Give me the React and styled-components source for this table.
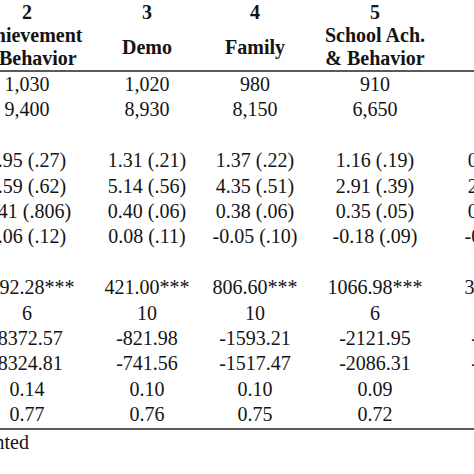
import React from 'react'
import styled, { createGlobalStyle } from 'styled-components'

const GlobalStyle = createGlobalStyle`
  html, body {
    margin: 0;
    padding: 0;
    background: #ffffff;
    overflow: hidden;
  }
  body {
    font-family: "Liberation Serif", "Times New Roman", serif;
    color: #141414;
  }
`

// the table is wider than the window; the label column sits off to the left
const Page = styled.div`
  width: 474px;
  height: 474px;
  overflow: hidden;
`

const Sheet = styled.div`
  margin-left: -233px;
  width: max-content;
`

const Table = styled.table`
  border-collapse: collapse;
  table-layout: fixed;
  font-family: "Liberation Serif", "Times New Roman", serif;
  font-size: 20px;
  color: #141414;
`

const Col = styled.col`
  width: ${p => p.$w}px;
`

const NumberRow = styled.tr`
  height: 24px;
`

const LabelRow = styled.tr`
  border-bottom: 2px solid #5a5a5a;
`

const HeadCell = styled.th`
  padding: 0;
  font-weight: 700;
  text-align: center;
  vertical-align: middle;
  white-space: nowrap;
  line-height: ${p => (p.$tall ? '23px' : '24px')};
`

const Row = styled.tr`
  height: 25.4px;
  ${p => p.$last && 'border-bottom: 2px solid #5a5a5a;'}
`

const Cell = styled.td`
  padding: 0;
  text-align: ${p => (p.$stub ? 'left' : 'center')};
  white-space: nowrap;
  line-height: 25.4px;
`

const Note = styled.div`
  width: 262px;
  text-align: right;
  font-family: "Liberation Serif", "Times New Roman", serif;
  font-size: 20px;
  line-height: 24px;
  white-space: nowrap;
`

const widths = [200, 120, 120, 96, 144, 120]

const heads = [
  { n: '', label: ['Model'] },
  { n: '2', label: ['Achievement', '& Behavior'] },
  { n: '3', label: ['Demo'] },
  { n: '4', label: ['Family'] },
  { n: '5', label: ['School Ach.', '& Behavior'] },
  { n: '6', label: ['Full'] },
]

const rows = [
  ['Schools', '1,030', '1,020', '980', '910', '1,060'],
  ['Students', '9,400', '8,930', '8,150', '6,650', '10,200'],
  null,
  ['Intercept', '0.95 (.27)', '1.31 (.21)', '1.37 (.22)', '1.16 (.19)', '0.98 (.28)'],
  ['Between variance', '3.59 (.62)', '5.14 (.56)', '4.35 (.51)', '2.91 (.39)', '2.45 (.40)'],
  ['Within variance', '0.41 (.806)', '0.40 (.06)', '0.38 (.06)', '0.35 (.05)', '0.36 (.05)'],
  ['Covariance', '0.06 (.12)', '0.08 (.11)', '-0.05 (.10)', '-0.18 (.09)', '-0.21 (.12)'],
  null,
  ['Chi-square', '1092.28***', '421.00***', '806.60***', '1066.98***', '318.45***'],
  ['df', '6', '10', '10', '6', '8'],
  ['AIC', '-8372.57', '-821.98', '-1593.21', '-2121.95', '-1421.08'],
  ['BIC', '-8324.81', '-741.56', '-1517.47', '-2086.31', '-1362.40'],
  ['RMSEA', '0.14', '0.10', '0.10', '0.09', '0.08'],
  ['CFI', '0.77', '0.76', '0.75', '0.72', '0.81'],
]

export default function App() {
  const lastIndex = rows.length - 1
  return (
    <Page>
      <GlobalStyle />
      <Sheet>
        <Table>
          <colgroup>
            {widths.map((w, i) => <Col key={i} $w={w} />)}
          </colgroup>
          <thead>
            <NumberRow>
              {heads.map((h, i) => <HeadCell key={i}>{h.n}</HeadCell>)}
            </NumberRow>
            <LabelRow>
              {heads.map((h, i) => (
                <HeadCell key={i} $tall>
                  {h.label.map((line, j) => <div key={j}>{line}</div>)}
                </HeadCell>
              ))}
            </LabelRow>
          </thead>
          <tbody>
            {rows.map((r, i) =>
              r ? (
                <Row key={i} $last={i === lastIndex}>
                  {r.map((v, j) => <Cell key={j} $stub={j === 0}>{v}</Cell>)}
                </Row>
              ) : (
                <Row key={i}>
                  <Cell colSpan={6}>&nbsp;</Cell>
                </Row>
              )
            )}
          </tbody>
        </Table>
        <Note>Note. Estimates presented</Note>
      </Sheet>
    </Page>
  )
}
